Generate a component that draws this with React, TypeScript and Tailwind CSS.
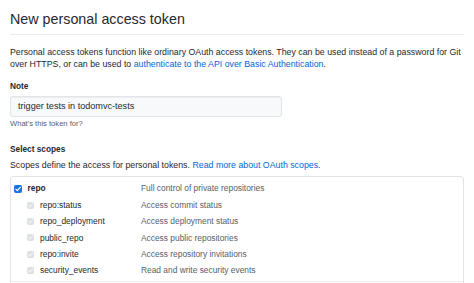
const scopes = [
  { name: 'repo:status', desc: 'Access commit status' },
  { name: 'repo_deployment', desc: 'Access deployment status' },
  { name: 'public_repo', desc: 'Access public repositories' },
  { name: 'repo:invite', desc: 'Access repository invitations' },
  { name: 'security_events', desc: 'Read and write security events' },
]

function Check({ disabled }: { disabled?: boolean }) {
  return (
    <span
      className={`flex shrink-0 items-center justify-center rounded-[2px] ${
        disabled ? 'h-[7px] w-[7px] bg-[#dcdfe3]' : 'h-[8px] w-[8px] bg-[#1f6fe5]'
      }`}
    >
      <svg viewBox="0 0 10 10" className="h-full w-full">
        <path
          d="M2.3 5.2 L4.2 7.1 L7.8 2.9"
          fill="none"
          stroke={disabled ? '#f4f5f6' : '#ffffff'}
          strokeWidth="1.5"
          strokeLinecap="round"
          strokeLinejoin="round"
        />
      </svg>
    </span>
  )
}

export default function App() {
  return (
    <div className="h-[283px] w-[474px] overflow-hidden bg-white px-[10px] font-['Liberation_Sans',Arial,sans-serif] text-[#24292e]">
      <div className="border-b border-[#eaecef] pb-[6px] pt-[10px]">
        <h2 className="text-[14.3px] leading-[18px] font-normal">New personal access token</h2>
      </div>

      <p className="mt-[10.5px] whitespace-nowrap text-[8.8px] leading-[12px]">
        Personal access tokens function like ordinary OAuth access tokens. They can be used instead of a password for Git
        <br />
        over HTTPS, or can be used to{' '}
        <a className="text-[#0366d6]">authenticate to the API over Basic Authentication</a>.
      </p>

      <div className="mt-[10.5px] text-[8.3px] leading-[12px] font-bold">Note</div>
      <div className="mt-[4px] flex h-[21px] w-[272px] items-center rounded-[3px] border border-[#e1e4e8] bg-[#f8f9fa] px-[7px] text-[9.1px] shadow-[inset_0_1px_1px_rgba(27,31,35,0.05)]">
        trigger tests in todomvc-tests
      </div>
      <div className="mt-[2px] text-[7.6px] leading-[10px] text-[#586069]">What's this token for?</div>

      <div className="mt-[14px] text-[8.3px] leading-[12px] font-bold">Select scopes</div>
      <p className="mt-[4px] text-[8.8px] leading-[12px]">
        Scopes define the access for personal tokens.{' '}
        <a className="text-[#0366d6]">Read more about OAuth scopes.</a>
      </p>

      <div className="mt-[5px] h-[120px] w-[454px] rounded-t-[3px] border border-[#e1e4e8] pt-[3.5px]">
        <div className="flex h-[16.4px] items-center text-[8.4px]">
          <div className="flex w-[130px] items-center gap-[5.5px] pl-[3px]">
            <Check />
            <span className="font-bold">repo</span>
          </div>
          <span className="text-[#586069]">Full control of private repositories</span>
        </div>
        {scopes.map((s) => (
          <div key={s.name} className="flex h-[16.4px] items-center text-[8.4px]">
            <div className="flex w-[130px] items-center gap-[6px] pl-[16px]">
              <Check disabled />
              <span>{s.name}</span>
            </div>
            <span className="text-[#586069]">{s.desc}</span>
          </div>
        ))}
        <div className="mt-[2.5px] border-t border-[#eaecef]" />
      </div>
    </div>
  )
}
